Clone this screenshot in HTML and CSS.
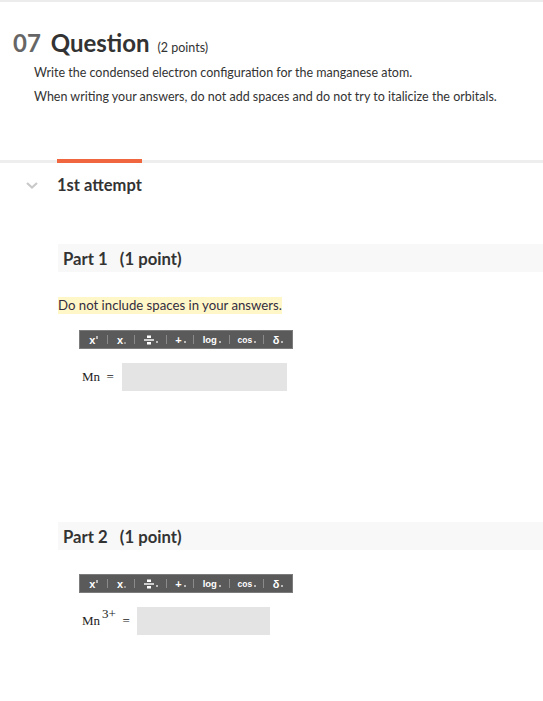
FILE: index.html
```
<!DOCTYPE html>
<html lang="en">
<head>
<meta charset="utf-8">
<title>07 Question</title>
<link rel="stylesheet" href="styles.css">
</head>
<body>
<div class="topbar"></div>
<header class="q-head">
  <h1 class="q-title"><span class="q-num">07</span> Question <span class="q-pts">(2 points)</span></h1>
  <p class="q-desc">Write the condensed electron configuration for the manganese atom.<br>When writing your answers, do not add spaces and do not try to italicize the orbitals.</p>
</header>
<div class="tabs"><div class="tab-active"></div></div>
<section class="attempt">
  <div class="attempt-head">
    <svg class="chev" width="12" height="7" viewBox="0 0 12 7"><path d="M1 1 L6 5.5 L11 1" fill="none" stroke="#c9c9c9" stroke-width="2.2"/></svg>
    <span class="attempt-title">1st attempt</span>
  </div>

  <div class="part">
    <h2 class="part-title">Part 1&nbsp;&nbsp; (1 point)</h2>
    <p class="note"><span class="hl">Do not include spaces in your answers.</span></p>
    <div class="toolbar">
      <span class="tb w28">x<span class="tb-sup"></span></span>
      <span class="tb w28">x<span class="tb-sub"></span></span>
      <span class="tb w32"><svg width="10" height="10" viewBox="0 0 10 10"><rect x="3" y="0.5" width="4" height="2.5" fill="#fff"/><rect x="0" y="4.3" width="10" height="1.4" fill="#fff"/><rect x="3" y="7" width="4" height="2.5" fill="#fff"/></svg><span class="tb-dot"></span></span>
      <span class="tb w27">+<span class="tb-dot"></span></span>
      <span class="tb w36"><span class="tb-sm">log</span><span class="tb-dot"></span></span>
      <span class="tb w35"><span class="tb-xs">cos</span><span class="tb-dot"></span></span>
      <span class="tb w28 last">δ<span class="tb-dot"></span></span>
    </div>
    <div class="answer">
      <span class="label">Mn&nbsp; =</span>
      <span class="input in1"></span>
    </div>
  </div>

  <div class="part part2">
    <h2 class="part-title">Part 2&nbsp;&nbsp; (1 point)</h2>
    <div class="toolbar tb2">
      <span class="tb w28">x<span class="tb-sup"></span></span>
      <span class="tb w28">x<span class="tb-sub"></span></span>
      <span class="tb w32"><svg width="10" height="10" viewBox="0 0 10 10"><rect x="3" y="0.5" width="4" height="2.5" fill="#fff"/><rect x="0" y="4.3" width="10" height="1.4" fill="#fff"/><rect x="3" y="7" width="4" height="2.5" fill="#fff"/></svg><span class="tb-dot"></span></span>
      <span class="tb w27">+<span class="tb-dot"></span></span>
      <span class="tb w36"><span class="tb-sm">log</span><span class="tb-dot"></span></span>
      <span class="tb w35"><span class="tb-xs">cos</span><span class="tb-dot"></span></span>
      <span class="tb w28 last">δ<span class="tb-dot"></span></span>
    </div>
    <div class="answer ans2">
      <span class="label">Mn<sup class="chg">3+</sup>&nbsp; =</span>
      <span class="input in2"></span>
    </div>
  </div>
</section>
</body>
</html>
```
FILE: styles.css
```
html, body {
  margin: 0;
  padding: 0;
  background: #fff;
}
body {
  font-family: Lato, "Open Sans", "Liberation Sans", sans-serif;
  color: #333;
  width: 543px;
  overflow: hidden;
}
.topbar {
  height: 2px;
  background: #ececec;
}
.q-head {
  padding: 26px 0 0 13px;
}
.q-title {
  margin: 0;
  font-size: 24px;
  line-height: 30px;
  height: 30px;
  font-weight: 700;
  color: #333;
}
.q-num {
  color: #666;
  margin-right: 4px;
}
.q-pts {
  font-size: 12.5px;
  line-height: 1;
  font-weight: 400;
  color: #333;
  margin-left: 2px;
}
.q-desc {
  margin: 3px 0 0 21px;
  font-size: 12.5px;
  line-height: 24px;
  color: #333;
}
.tabs {
  display: flex;
  margin-top: 50px;
  padding-left: 57px;
  border-bottom: 3px solid #eeeeee;
}
.tab-active {
  width: 85px;
  height: 4px;
  background: #f0673f;
  margin-bottom: -3px;
}
.attempt-head {
  display: flex;
  align-items: center;
  margin-top: 12px;
  height: 20px;
}
.chev {
  margin-left: 26px;
  margin-right: 19px;
  margin-top: 1px;
}
.attempt-title {
  font-size: 16.5px;
  font-weight: 700;
  line-height: 20px;
  color: #333;
}
.part {
  margin-left: 58px;
  margin-top: 49px;
}
.part2 {
  margin-top: 131px;
}
.part-title {
  margin: 0;
  height: 28px;
  box-sizing: border-box;
  padding: 1px 0 0 5px;
  line-height: 28px;
  font-size: 16.7px;
  font-weight: 700;
  color: #333;
  background: #f8f8f8;
}
.note {
  margin: 25px 0 0 0;
  font-size: 13.2px;
  line-height: 17px;
}
.hl {
  display: inline-block;
  background: #fff7c8;
  color: #332c40;
}
.toolbar {
  display: flex;
  margin: 16px 0 0 21px;
  width: 214px;
  height: 19px;
  box-sizing: border-box;
  background: #5a5a5a;
  border: 1px solid #7c7c7c;
  font-family: "Liberation Sans", Arial, sans-serif;
  font-weight: 700;
  color: #fff;
  font-size: 11px;
}
.tb2 {
  margin-top: 24px;
}
.tb {
  display: flex;
  align-items: center;
  justify-content: center;
  height: 100%;
  position: relative;
  box-sizing: border-box;
}
.tb::after {
  content: "";
  position: absolute;
  right: 0;
  top: 4px;
  bottom: 4px;
  width: 1px;
  background: #8a8a8a;
}
.tb.last::after {
  display: none;
}
.w28 { width: 28px; }
.w32 { width: 32px; }
.w27 { width: 27px; }
.w36 { width: 36px; }
.w35 { width: 35px; }
.tb-sup {
  width: 2px;
  height: 3px;
  background: #bbb;
  margin-left: 1px;
  align-self: flex-start;
  margin-top: 5px;
}
.tb-sub {
  width: 2px;
  height: 2px;
  background: #999;
  margin-left: 1px;
  align-self: flex-end;
  margin-bottom: 4px;
}
.tb-dot {
  width: 2px;
  height: 2px;
  background: #bbb;
  margin-left: 2px;
  align-self: flex-end;
  margin-bottom: 5px;
}
.tb-sm {
  font-size: 9.5px;
}
.tb-xs {
  font-size: 8.5px;
}
.answer {
  display: flex;
  align-items: center;
  margin: 14px 0 0 24px;
  height: 28px;
}
.ans2 {
  margin-top: 14px;
}
.label {
  font-family: "Liberation Serif", "Times New Roman", serif;
  font-size: 13px;
  color: #222;
  white-space: nowrap;
}
.chg {
  font-size: 13px;
  line-height: 0;
  vertical-align: 7px;
  margin-left: 2px;
}
.input {
  display: block;
  height: 28px;
  background: #e4e4e4;
}
.in1 {
  width: 165px;
  margin-left: 8px;
}
.in2 {
  width: 133px;
  margin-left: 7px;
}
```
